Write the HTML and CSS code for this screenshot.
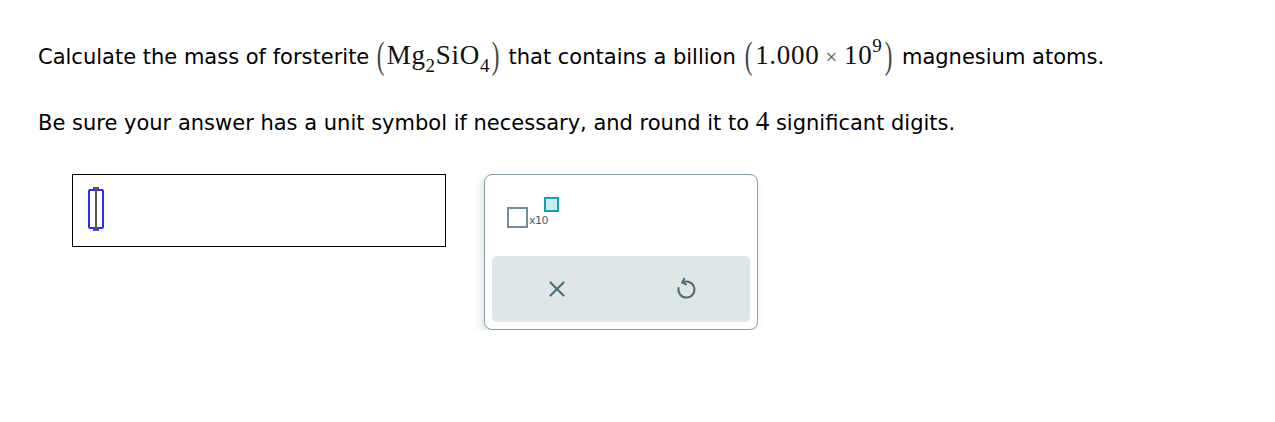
FILE: index.html
```html
<!DOCTYPE html>
<html>
<head>
<meta charset="utf-8">
<link rel="stylesheet" href="styles.css">
</head>
<body>
<div class="page">
  <p class="line line1">Calculate the mass of forsterite <span class="math m1"><span class="paren">(</span>Mg<sub>2</sub>SiO<sub>4</sub><span class="paren">)</span></span> that contains a billion <span class="math"><span class="paren">(</span>1.000<span class="times">×</span>10<sup>9</sup><span class="paren">)</span></span> magnesium atoms.</p>
  <p class="line line2">Be sure your answer has a unit symbol if necessary, and round it to <span class="num">4</span> significant digits.</p>
  <div class="answer">
    <div class="input">
      <div class="cursor"><span class="bar"></span></div>
    </div>
    <div class="panel">
      <div class="tools">
        <div class="sci">
          <span class="base"></span><span class="x10">x10</span><span class="exp"></span>
        </div>
      </div>
      <div class="actions">
        <button class="btn" aria-label="clear">
          <svg width="20" height="20" viewBox="0 0 20 20"><path d="M3.5 3.5 L16.5 16.5 M16.5 3.5 L3.5 16.5" stroke="#4a6f7a" stroke-width="2.2" stroke-linecap="round" fill="none"/></svg>
        </button>
        <button class="btn" aria-label="undo">
          <svg width="24" height="24" viewBox="0 0 24 24"><path d="M8.6 5.6 A8 8 0 1 1 4.6 11" stroke="#4a6f7a" stroke-width="2" fill="none" stroke-linecap="round"/><path d="M10.2 1.6 L8.2 5.6 L12 7.4" stroke="#4a6f7a" stroke-width="2" fill="none" stroke-linecap="round" stroke-linejoin="round"/></svg>
        </button>
      </div>
    </div>
  </div>
</div>
</body>
</html>
```
FILE: styles.css
```css
html, body { margin: 0; padding: 0; background: #fff; }
.page {
  padding: 39px 0 0 38px;
  font-family: "DejaVu Sans", Verdana, sans-serif;
  font-size: 21px;
  color: #000;
}
.line { margin: 0; line-height: 32px; height: 32px; white-space: nowrap; }
.line2 { margin-top: 34px; }
.math {
  font-family: "Liberation Serif", "Times New Roman", serif;
  font-size: 27px;
  margin: 0 1px 0 1px;
  letter-spacing: 0.7px;
  color: #111;
}
.m1 { margin-left: -1px; margin-right: 0; }
.math sub { font-size: 19px; vertical-align: -8px; line-height: 0; }
.math sup { font-size: 19px; vertical-align: 12px; line-height: 0; }
.paren {
  display: inline-block;
  transform: scale(0.85, 1.4);
  color: #444;
  margin: 0 1px;
}
.times { font-size: 21px; color: #555; margin: 0 6px; }
.num { font-family: "Liberation Serif", "Times New Roman", serif; font-size: 27px; }
.answer {
  display: flex;
  align-items: flex-start;
  gap: 38px;
  margin-top: 37px;
  margin-left: 34px;
}
.input {
  box-sizing: border-box;
  width: 374px;
  height: 73px;
  border: 1px solid #000;
  padding: 14px 0 0 15px;
}
.cursor {
  box-sizing: border-box;
  width: 16px;
  height: 40px;
  border: 2px solid #2b2bff;
  border-radius: 2px;
  display: flex;
  justify-content: center;
}
.bar {
  width: 2px;
  height: 42px;
  margin-top: -3px;
  background: #555;
  position: relative;
}
.bar::before, .bar::after {
  content: "";
  position: absolute;
  left: -2px;
  width: 6px;
  height: 2px;
  background: #555;
}
.bar::before { top: -1px; }
.bar::after { bottom: -1px; }
.panel {
  box-sizing: border-box;
  width: 274px;
  height: 156px;
  border: 1px solid #879fa5;
  border-radius: 8px;
  background: #fff;
  box-shadow: -3px 4px 8px rgba(60, 80, 90, 0.16);
  padding: 0 7px 7px 7px;
  display: flex;
  flex-direction: column;
}
.tools { height: 81px; }
.sci {
  display: flex;
  align-items: flex-start;
  padding: 22px 0 0 15px;
}
.base {
  box-sizing: border-box;
  width: 21px;
  height: 21px;
  border: 2px solid #6f9099;
  margin-top: 10px;
}
.x10 {
  font-family: "DejaVu Sans", sans-serif;
  font-size: 11px;
  color: #3f5f68;
  margin-top: 17px;
  margin-left: 1px;
  letter-spacing: -0.5px;
}
.exp {
  box-sizing: border-box;
  width: 15px;
  height: 15px;
  border: 2px solid #139fb6;
  background: #c9ecf3;
  margin-left: -4px;
}
.actions {
  flex: 1;
  background: #dfe6e8;
  border-radius: 5px;
  display: grid;
  grid-template-columns: 1fr 1fr;
}
.btn {
  border: 0;
  background: transparent;
  padding: 0;
  display: flex;
  align-items: center;
  justify-content: center;
}
```
